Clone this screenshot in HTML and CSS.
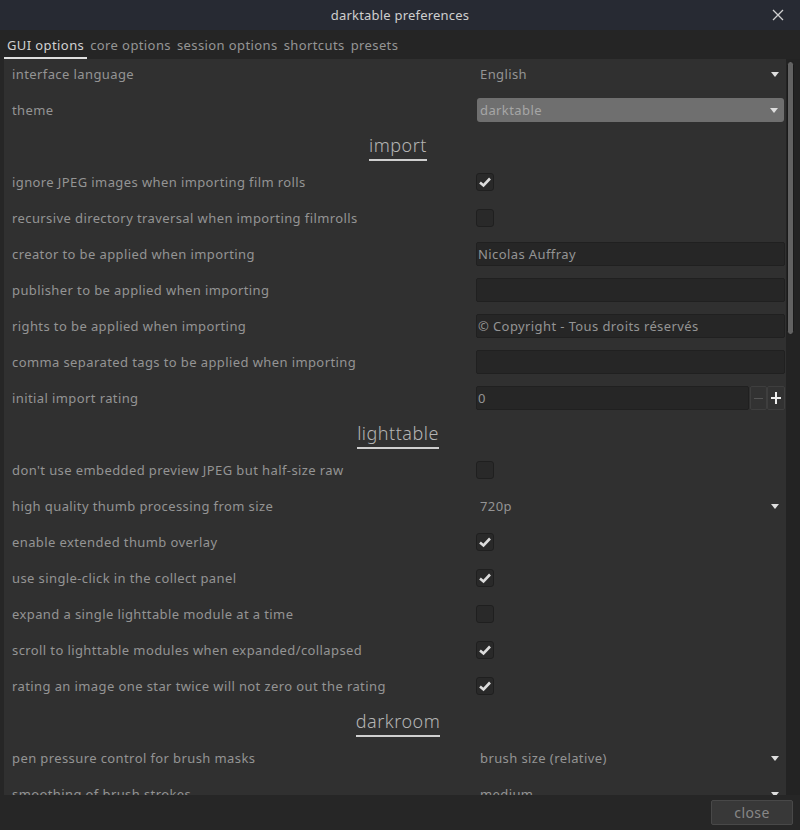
FILE: index.html
```html
<!DOCTYPE html>
<html>
<head>
<meta charset="utf-8">
<link rel="stylesheet" href="styles.css">
</head>
<body>
<div class="window">
  <div class="titlebar">
    <span class="title">darktable preferences</span>
    <svg class="xbtn" width="12" height="12" viewBox="0 0 12 12"><path d="M1 1L11 11M11 1L1 11" stroke="#d0d0d0" stroke-width="1.3" fill="none"/></svg>
  </div>
  <div class="tabs">
    <span class="tab active">GUI options</span>
    <span class="tab">core options</span>
    <span class="tab">session options</span>
    <span class="tab">shortcuts</span>
    <span class="tab">presets</span>
  </div>
  <div class="body">
    <div class="panel">
      <div class="row"><span class="label">interface language</span><div class="ctrl"><div class="combo"><span>English</span><i class="arrow"></i></div></div></div>
      <div class="row"><span class="label">theme</span><div class="ctrl"><div class="combo hl"><span>darktable</span><i class="arrow"></i></div></div></div>
      <div class="row head"><span class="htitle">import</span></div>
      <div class="row"><span class="label">ignore JPEG images when importing film rolls</span><div class="ctrl"><div class="check"><svg width="14" height="12" viewBox="0 0 14 12"><path d="M2 6.5L5.5 9.5L12 2.5" stroke="#dcdcdc" stroke-width="2.6" fill="none"/></svg></div></div></div>
      <div class="row"><span class="label">recursive directory traversal when importing filmrolls</span><div class="ctrl"><div class="check"></div></div></div>
      <div class="row"><span class="label">creator to be applied when importing</span><div class="ctrl"><div class="entry">Nicolas Auffray</div></div></div>
      <div class="row"><span class="label">publisher to be applied when importing</span><div class="ctrl"><div class="entry"></div></div></div>
      <div class="row"><span class="label">rights to be applied when importing</span><div class="ctrl"><div class="entry">© Copyright - Tous droits réservés</div></div></div>
      <div class="row"><span class="label">comma separated tags to be applied when importing</span><div class="ctrl"><div class="entry"></div></div></div>
      <div class="row"><span class="label">initial import rating</span><div class="ctrl spin"><div class="entry">0</div><div class="sbtn minus"><i></i></div><div class="sbtn plus"><i></i><b></b></div></div></div>
      <div class="row head"><span class="htitle">lighttable</span></div>
      <div class="row"><span class="label">don't use embedded preview JPEG but half-size raw</span><div class="ctrl"><div class="check"></div></div></div>
      <div class="row"><span class="label">high quality thumb processing from size</span><div class="ctrl"><div class="combo"><span>720p</span><i class="arrow"></i></div></div></div>
      <div class="row"><span class="label">enable extended thumb overlay</span><div class="ctrl"><div class="check"><svg width="14" height="12" viewBox="0 0 14 12"><path d="M2 6.5L5.5 9.5L12 2.5" stroke="#dcdcdc" stroke-width="2.6" fill="none"/></svg></div></div></div>
      <div class="row"><span class="label">use single-click in the collect panel</span><div class="ctrl"><div class="check"><svg width="14" height="12" viewBox="0 0 14 12"><path d="M2 6.5L5.5 9.5L12 2.5" stroke="#dcdcdc" stroke-width="2.6" fill="none"/></svg></div></div></div>
      <div class="row"><span class="label">expand a single lighttable module at a time</span><div class="ctrl"><div class="check"></div></div></div>
      <div class="row"><span class="label">scroll to lighttable modules when expanded/collapsed</span><div class="ctrl"><div class="check"><svg width="14" height="12" viewBox="0 0 14 12"><path d="M2 6.5L5.5 9.5L12 2.5" stroke="#dcdcdc" stroke-width="2.6" fill="none"/></svg></div></div></div>
      <div class="row"><span class="label">rating an image one star twice will not zero out the rating</span><div class="ctrl"><div class="check"><svg width="14" height="12" viewBox="0 0 14 12"><path d="M2 6.5L5.5 9.5L12 2.5" stroke="#dcdcdc" stroke-width="2.6" fill="none"/></svg></div></div></div>
      <div class="row head"><span class="htitle">darkroom</span></div>
      <div class="row"><span class="label">pen pressure control for brush masks</span><div class="ctrl"><div class="combo"><span>brush size (relative)</span><i class="arrow"></i></div></div></div>
      <div class="row"><span class="label">smoothing of brush strokes</span><div class="ctrl"><div class="combo"><span>medium</span><i class="arrow"></i></div></div></div>
    </div>
    <div class="scrollbar"><div class="thumb"></div></div>
  </div>
  <div class="footer"><button class="close">close</button></div>
</div>
</body>
</html>
```

FILE: styles.css
```css
* { box-sizing: border-box; }
html, body { margin: 0; padding: 0; background: #262626; }
body { font-family: "Noto Sans", "Open Sans", sans-serif; width: 800px; height: 830px; overflow: hidden; letter-spacing: 0.4px; }
.window { display: flex; flex-direction: column; width: 800px; height: 830px; background: #262626; }
.titlebar { height: 30px; background: #272a33; display: flex; align-items: center; justify-content: center; position: relative; flex: none; }
.title { color: #cfcfcf; font-size: 13px; letter-spacing: 0.2px; }
.xbtn { position: absolute; right: 16px; top: 9px; }
.tabs { height: 29px; flex: none; display: flex; align-items: flex-start; padding-left: 4px; background: #252525; }
.tab { font-size: 13px; color: #959595; padding: 6px 3px 0; height: 29px; line-height: 18px; }
.tab.active { color: #d2d2d2; border-bottom: 2px solid #e0e0e0; }
.body { flex: 1; display: flex; padding-left: 4px; min-height: 0; overflow: hidden; }
.panel { width: 782px; background: #303030; overflow: hidden; display: flex; flex-direction: column; }
.row { height: 36px; flex: none; display: flex; align-items: flex-start; }
.label { width: 472px; padding-left: 8px; padding-top: 6px; line-height: 18px; font-size: 13px; color: #949494; white-space: nowrap; }
.ctrl { width: 309px; height: 30px; display: flex; align-items: center; }
.combo { width: 309px; height: 24px; display: flex; align-items: center; justify-content: space-between; padding: 0 6px 0 4px; font-size: 13px; color: #949494; border-radius: 3px; }
.combo.hl { background: #6f6f6f; color: #a6a6a6; margin-left: 1px; width: 307px; padding-left: 3px; }
.arrow { width: 0; height: 0; border-left: 4px solid transparent; border-right: 4px solid transparent; border-top: 5px solid #dedede; display: block; }
.check { width: 18px; height: 18px; border-radius: 3px; background: #292929; border: 1px solid #1f1f1f; display: flex; align-items: center; justify-content: center; }
.entry { width: 309px; height: 24px; background: #262626; border: 1px solid #202020; border-radius: 2px; font-size: 13px; color: #949494; line-height: 22px; padding-left: 1px; white-space: nowrap; }
.spin .entry { width: 273px; }
.sbtn { width: 18px; height: 24px; background: #323232; border: 1px solid #3e3e3e; border-radius: 2px; position: relative; }
.sbtn.minus { margin-left: 1px; width: 17px; }
.sbtn i { position: absolute; left: 3px; right: 3px; top: 11px; height: 1px; background: #555; }
.sbtn.plus i { background: #eeeeee; left: 3px; right: 3px; top: 10px; height: 2px; }
.sbtn.plus b { position: absolute; top: 5px; bottom: 5px; left: 7px; width: 2px; background: #eeeeee; }
.row.head { justify-content: center; padding-left: 6px; }
.htitle { font-size: 18px; font-weight: 300; color: #b4b4b4; letter-spacing: 0.5px; line-height: 22px; padding-top: 3px; border-bottom: 2px solid #cfcfcf; height: 30px; }
.scrollbar { width: 14px; background: #232323; position: relative; flex: none; }
.thumb { position: absolute; left: 1px; top: 2px; width: 7px; height: 274px; background: #626262; border: 1px solid #1a1a1a; border-radius: 4px; }
.footer { height: 35px; flex: none; background: #262626; display: flex; justify-content: flex-end; align-items: flex-start; padding: 5px 7px 0 0; }
.close { width: 82px; height: 25px; background: #383838; border: 1px solid #484848; border-radius: 2px; color: #878787; font-family: "Noto Sans", sans-serif; font-size: 14px; letter-spacing: 0.4px; padding: 0; }
```
